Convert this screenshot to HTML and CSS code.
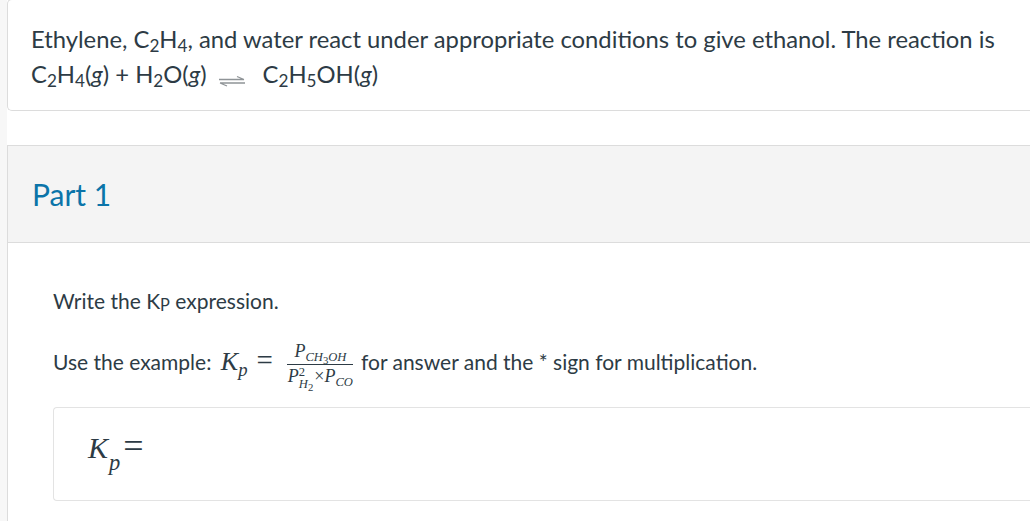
FILE: index.html
```html
<!DOCTYPE html>
<html>
<head>
<meta charset="utf-8">
<link rel="stylesheet" href="styles.css">
</head>
<body>
<div class="page">
  <div class="strip"></div>
  <main class="content">
    <section class="intro card">
      <p class="line">Ethylene, C<sub>2</sub>H<sub>4</sub>, and water react under appropriate conditions to give ethanol. The reaction is</p>
      <p class="line">C<sub>2</sub>H<sub>4</sub>(<i class="g">g</i>) + H<sub>2</sub>O(<i class="g">g</i>)<svg class="eq" width="28" height="12" viewBox="0 0 28 12"><path d="M1 4.5H26M19 1.5L26 4.5" stroke="#8f9497" stroke-width="1.3" fill="none"/><path d="M2 8H27M2 8L9 11" stroke="#8f9497" stroke-width="1.3" fill="none"/></svg><span class="prod">C<sub>2</sub>H<sub>5</sub>OH(<i class="g">g</i>)</span></p>
    </section>
    <section class="part">
      <header class="part-head"><h2>Part 1</h2></header>
      <div class="part-body">
        <p class="q">Write the K<span class="kp">P</span> expression.</p>
        <p class="q ex">Use the example: <span class="m"><i>K</i><sub><i>p</i></sub></span><span class="m eqs">=</span><span class="frac"><span class="num"><i>P</i><sub><i>CH</i><sub>3</sub><i>OH</i></sub></span><span class="den"><i>P</i><span class="supsub"><span class="s2">2</span><span class="sh"><i>H</i><sub>2</sub></span></span>×<i>P</i><sub><i>CO</i></sub></span></span>for answer and the * sign for multiplication.</p>
        <div class="answer">
          <span class="m big"><i>K</i><sub class="psub"><i>p</i></sub><span class="eqbig">=</span></span>
        </div>
      </div>
    </section>
  </main>
</div>
</body>
</html>
```
FILE: styles.css
```css
* { box-sizing: border-box; }
html, body { margin: 0; padding: 0; background: #fff; }
body { font-family: Lato, "Noto Sans", sans-serif; color: #2d3b45; }
.page { display: flex; min-height: 521px; width: 1060px; }
.strip { width: 7px; flex: none; background: #f7f7f7; }
.content { flex: 1; display: flex; flex-direction: column; }
.card { border: 1px solid #dcdcdc; border-right: none; border-radius: 5px 0 0 5px; }
.intro { height: 112px; padding: 22px 0 0 23px; margin-top: -1px; }
.line { margin: 0; font-size: 23.8px; line-height: 35px; white-space: nowrap; }
.line sub { font-size: 0.72em; vertical-align: -0.22em; line-height: 0; }
.g { font-style: italic; }
.eq { margin: 0 17px 0 11px; vertical-align: -4px; }
.part { margin-top: 34px; flex: 1; border-left: 1px solid #dcdcdc; display: flex; flex-direction: column; }
.part-head { background: #f4f4f4; border-top: 1px solid #dcdcdc; border-bottom: 1px solid #dcdcdc; height: 98px; padding: 0 0 0 24px; display: flex; align-items: center; }
.part-head h2 { margin: 0; font-weight: 400; font-size: 30px; color: #0b74a9; }
.part-body { padding: 43px 0 0 45px; }
.q { margin: 0; font-size: 21px; line-height: 30px; white-space: nowrap; }
.kp { font-size: 0.78em; vertical-align: -0.12em; }
.ex { margin-top: 20px; line-height: 30px; }
.m { font-family: "Liberation Serif", "DejaVu Serif", serif; font-size: 26px; }
.m sub { font-size: 0.72em; vertical-align: -0.3em; line-height: 0; }
.ex .m:first-of-type { margin-left: 4px; }
.eqs { margin: 0 12px 0 9px; font-style: normal; font-size: 29px; }
.frac { display: inline-flex; flex-direction: column; align-items: center; vertical-align: middle; font-family: "Liberation Serif", serif; font-size: 18px; margin: 0 7px 0 2px; }
.frac i { font-style: italic; }
.num { height: 25px; padding: 0 7px 0; border-bottom: 1px solid #2d3b45; line-height: 23px; }
.den { height: 25px; padding: 0 1px; line-height: 23px; }
.frac sub { font-size: 0.7em; vertical-align: -0.3em; line-height: 0; }
.frac sub sub { font-size: 0.85em; vertical-align: -0.25em; }
.supsub { display: inline-flex; flex-direction: column; font-size: 0.7em; line-height: 12px; vertical-align: 0.45em; margin-right: 1px; }
.supsub .sh sub { font-size: 0.85em; vertical-align: -0.3em; }
.answer { margin-top: 17px; height: 94px; border: 1px solid #e3e3e3; border-right: none; border-radius: 4px 0 0 4px; padding: 17px 0 0 34px; }
.big { font-size: 30px; }
.big .psub { font-size: 0.75em; vertical-align: -0.55em; margin-left: 1px; margin-right: 3px; }
.eqbig { font-size: 1.2em; }
```
